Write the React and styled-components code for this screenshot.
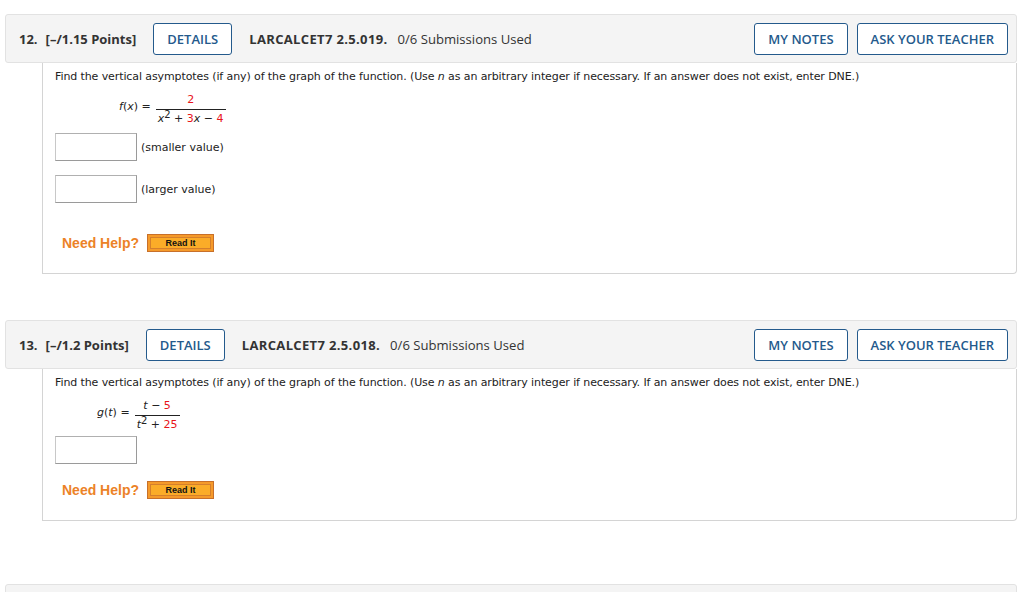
import React from 'react'
import styled, { createGlobalStyle } from 'styled-components'

const questions = [
  {
    num: '12.',
    points: '[–/1.15 Points]',
    code: 'LARCALCET7 2.5.019.',
    gap: 46,
    fn: 'f',
    arg: 'x',
    labelIndent: 64,
    answerGap: 8,
    helpGap: 31,
    numerator: [{ t: '2', red: true }],
    denominator: [
      { t: 'x', it: true },
      { t: '2', sup: true },
      { t: ' + ' },
      { t: '3', red: true },
      { t: 'x', it: true },
      { t: ' − ' },
      { t: '4', red: true },
    ],
    inputs: ['(smaller value)', '(larger value)'],
  },
  {
    num: '13.',
    points: '[–/1.2 Points]',
    code: 'LARCALCET7 2.5.018.',
    gap: 63,
    fn: 'g',
    arg: 't',
    labelIndent: 42,
    answerGap: 5,
    helpGap: 17,
    numerator: [{ t: 't', it: true }, { t: ' − ' }, { t: '5', red: true }],
    denominator: [
      { t: 't', it: true },
      { t: '2', sup: true },
      { t: ' + ' },
      { t: '25', red: true },
    ],
    inputs: [''],
  },
]

const App = () => (
  <>
    <GlobalStyle />
    <Page>
      {questions.map(q => (
        <Question key={q.num} $gap={q.gap}>
          <Header>
            <Num>{q.num}</Num>
            <Points>{q.points}</Points>
            <OutlineButton $ml={17}>DETAILS</OutlineButton>
            <Code>{q.code}</Code>
            <Subs>0/6 Submissions Used</Subs>
            <Actions>
              <OutlineButton>MY NOTES</OutlineButton>
              <OutlineButton>ASK YOUR TEACHER</OutlineButton>
            </Actions>
          </Header>
          <Body>
            <Prompt>
              Find the vertical asymptotes (if any) of the graph of the function. (Use <i>n</i> as an
              arbitrary integer if necessary. If an answer does not exist, enter DNE.)
            </Prompt>
            <Formula $indent={q.labelIndent}>
              <FnLabel>
                <i>{q.fn}</i>(<i>{q.arg}</i>) =
              </FnLabel>
              <Fraction>
                <Numer>
                  {q.numerator.map((p, i) => (
                    <Part key={i} {...partProps(p)}>{p.t}</Part>
                  ))}
                </Numer>
                <Denom>
                  {q.denominator.map((p, i) => (
                    <Part key={i} {...partProps(p)}>{p.t}</Part>
                  ))}
                </Denom>
              </Fraction>
            </Formula>
            {q.inputs.map(label => (
              <AnswerRow key={label} $first={q.answerGap}>
                <AnswerBox />
                {label && <AnswerLabel>{label}</AnswerLabel>}
              </AnswerRow>
            ))}
            <Help $gap={q.helpGap}>
              <HelpText>Need Help?</HelpText>
              <ReadIt>Read It</ReadIt>
            </Help>
          </Body>
        </Question>
      ))}
      <Header />
    </Page>
  </>
)

const partProps = p => ({ $red: p.red, $it: p.it, $sup: p.sup })

const GlobalStyle = createGlobalStyle`
  body {
    margin: 0;
    background: #fff;
    overflow: hidden;
  }
`

const Page = styled.div`
  width: 1012px;
  padding: 14px 0 0 5px;
`

const Question = styled.div`
  margin-bottom: ${({ $gap }) => $gap}px;
`

const Header = styled.div`
  display: flex;
  align-items: center;
  height: 47px;
  padding: 0 8px 0 13px;
  background: #f4f4f4;
  border: 1px solid #e2e2e2;
  border-radius: 3px;
  font-family: 'Open Sans', sans-serif;
  font-size: 13px;
  color: #333;
`

const Num = styled.span`
  font-weight: 700;
`

const Points = styled.span`
  font-weight: 700;
  margin-left: 8px;
`

const Code = styled.span`
  font-weight: 700;
  margin-left: 17px;
  letter-spacing: 0.35px;
`

const Subs = styled.span`
  margin-left: 10px;
  font-size: 13.1px;
`

const Actions = styled.div`
  display: flex;
  gap: 9px;
  margin-left: auto;
`

const OutlineButton = styled.button`
  height: 32px;
  padding: 0 13px;
  margin-left: ${({ $ml }) => $ml || 0}px;
  background: #fff;
  border: 1.5px solid #245a8c;
  border-radius: 3px;
  color: #245a8c;
  font-family: 'Open Sans', sans-serif;
  font-size: 13px;
  font-weight: 600;
`

const Body = styled.div`
  margin-left: 37px;
  padding: 7px 12px 21px;
  background: #fff;
  border: 1px solid #d4d4d4;
  border-top: none;
  border-radius: 0 0 4px 0;
  font-family: 'DejaVu Sans', Verdana, sans-serif;
  font-size: 11px;
  color: #222;
`

const Prompt = styled.div`
  line-height: 14px;
  letter-spacing: -0.1px;
`

const Formula = styled.div`
  display: flex;
  align-items: center;
  padding-left: ${({ $indent }) => $indent}px;
  margin-top: 9px;
  line-height: 13px;
`

const FnLabel = styled.span`
  margin-right: 5px;
  margin-top: -6px;
`

const Fraction = styled.div`
  display: flex;
  flex-direction: column;
  align-items: center;
`

const Numer = styled.div`
  padding: 0 2px 3px;
  border-bottom: 1px solid #222;
  align-self: stretch;
  text-align: center;
`

const Denom = styled.div`
  padding: 2px 2px 0;
  white-space: pre;
`

const Part = styled.span`
  white-space: pre;
  color: ${({ $red }) => ($red ? '#e8141a' : 'inherit')};
  font-style: ${({ $it }) => ($it ? 'italic' : 'normal')};
  ${({ $sup }) => $sup && 'position: relative; top: -4px; line-height: 0; font-size: 10px;'}
`

const AnswerRow = styled.div`
  display: flex;
  align-items: center;
  margin-top: ${({ $first }) => $first}px;

  & + & {
    margin-top: 14px;
  }
`

const AnswerBox = styled.div`
  width: 80px;
  height: 26px;
  border: 1px solid #9a9a9a;
  border-left-color: #c8c8c8;
  border-top-color: #b0b0b0;
  background: #fff;
`

const AnswerLabel = styled.span`
  margin-left: 4px;
`

const Help = styled.div`
  display: flex;
  align-items: center;
  margin: ${({ $gap }) => $gap}px 0 0 7px;
`

const HelpText = styled.span`
  font-family: 'Liberation Sans', Arial, sans-serif;
  font-size: 14px;
  font-weight: 700;
  color: #ec8227;
`

const ReadIt = styled.button`
  width: 67px;
  height: 18px;
  margin-left: 8px;
  padding: 0;
  background: #fbac28;
  border: 1px solid #c8702a;
  box-shadow: inset 0 0 0 2px #f59a2a, inset 0 0 0 3px #d57f2c;
  font-family: 'Liberation Sans', Arial, sans-serif;
  font-size: 9px;
  font-weight: 700;
  color: #111;
`

export default App
